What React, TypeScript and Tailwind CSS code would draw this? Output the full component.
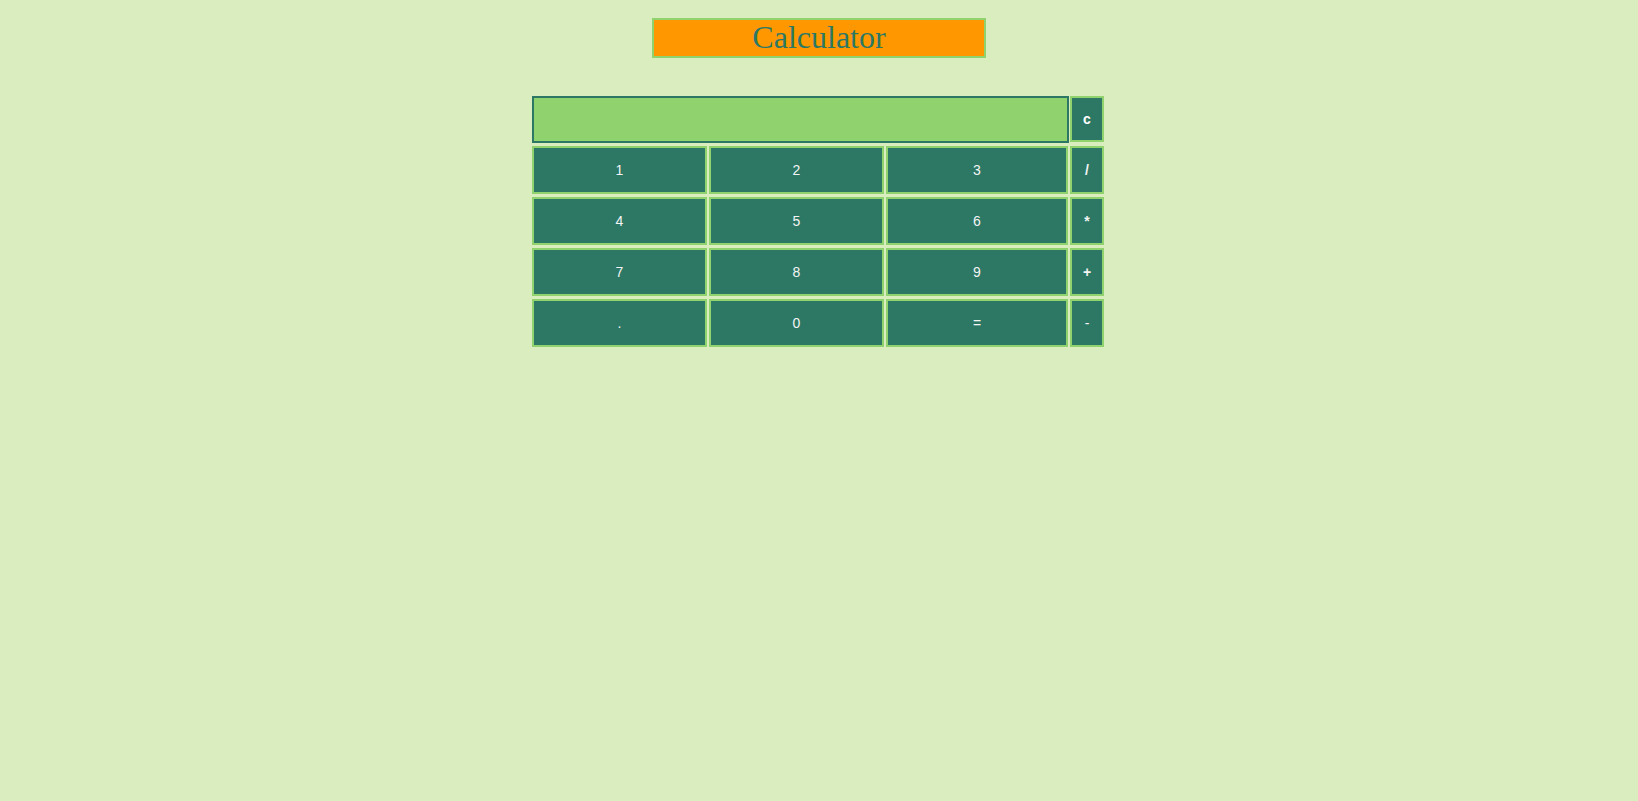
import React from "react";

const rows: { label: string; op?: boolean }[][] = [
  [{ label: "1" }, { label: "2" }, { label: "3" }, { label: "/", op: true }],
  [{ label: "4" }, { label: "5" }, { label: "6" }, { label: "*", op: true }],
  [{ label: "7" }, { label: "8" }, { label: "9" }, { label: "+", op: true }],
  [{ label: "." }, { label: "0" }, { label: "=" }, { label: "-" }],
];

export default function App() {
  return (
    <div className="min-h-[801px] w-full bg-[#d9edbf] flex flex-col items-center pt-[18px]">
      <h1
        className="w-[334px] h-[40px] border-2 border-[#90d26d] bg-[#ff9800] text-[#2c7865] text-[32px] leading-[34px] text-center"
        style={{ fontFamily: '"Liberation Serif", "Times New Roman", serif' }}
      >
        Calculator
      </h1>
      <div
        className="mt-[37px] grid grid-cols-[175px_175px_182px_34px] grid-rows-[48px_48px_48px_48px_48px] gap-x-[2px] gap-y-[3px] ml-[-2px]"
        style={{ fontFamily: '"Liberation Sans", Arial, sans-serif' }}
      >
        <div className="col-span-3 self-center h-[47px] mr-[-1px] border-2 border-[#2c7865] bg-[#90d26d]" />
        <button className="self-center h-[46px] border-2 border-[#90d26d] bg-[#2c7865] text-white text-[14px] font-bold">
          c
        </button>
        {rows.flat().map((b, i) => (
          <button
            key={i}
            className={`h-[48px] border-2 border-[#90d26d] bg-[#2c7865] text-[#f4f4f4] text-[14px] ${
              b.op ? "font-bold" : ""
            }`}
          >
            {b.label}
          </button>
        ))}
      </div>
    </div>
  );
}
